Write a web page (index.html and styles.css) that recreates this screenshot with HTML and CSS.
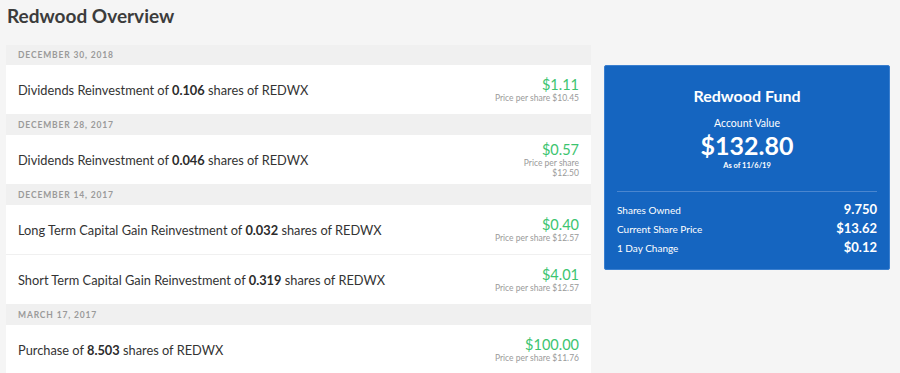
FILE: index.html
```html
<!DOCTYPE html>
<html>
<head>
<meta charset="utf-8">
<link rel="stylesheet" href="styles.css">
</head>
<body>
<h1 class="title">Redwood Overview</h1>
<div class="layout">
  <div class="list">
    <div class="date">DECEMBER 30, 2018</div>
    <div class="row">
      <div class="desc">Dividends Reinvestment of <b>0.106</b> shares of REDWX</div>
      <div class="amt"><div class="val">$1.11</div><div class="pps">Price per share $10.45</div></div>
    </div>
    <div class="date">DECEMBER 28, 2017</div>
    <div class="row">
      <div class="desc">Dividends Reinvestment of <b>0.046</b> shares of REDWX</div>
      <div class="amt"><div class="val">$0.57</div><div class="pps">Price per share<br>$12.50</div></div>
    </div>
    <div class="date">DECEMBER 14, 2017</div>
    <div class="row">
      <div class="desc">Long Term Capital Gain Reinvestment of <b>0.032</b> shares of REDWX</div>
      <div class="amt"><div class="val">$0.40</div><div class="pps">Price per share $12.57</div></div>
    </div>
    <div class="row">
      <div class="desc">Short Term Capital Gain Reinvestment of <b>0.319</b> shares of REDWX</div>
      <div class="amt"><div class="val">$4.01</div><div class="pps">Price per share $12.57</div></div>
    </div>
    <div class="date">MARCH 17, 2017</div>
    <div class="row">
      <div class="desc">Purchase of <b>8.503</b> shares of REDWX</div>
      <div class="amt"><div class="val">$100.00</div><div class="pps">Price per share $11.76</div></div>
    </div>
  </div>
  <div class="card">
    <div class="fund">Redwood Fund</div>
    <div class="av-label">Account Value</div>
    <div class="av">$132.80</div>
    <div class="asof">As of 11/6/19</div>
    <div class="stats">
      <div class="stat"><span>Shares Owned</span><b>9.750</b></div>
      <div class="stat"><span>Current Share Price</span><b>$13.62</b></div>
      <div class="stat"><span>1 Day Change</span><b>$0.12</b></div>
    </div>
  </div>
</div>
</body>
</html>
```
FILE: styles.css
```css
* { box-sizing: border-box; }
html, body { margin: 0; padding: 0; }
body {
  background: #f5f5f5;
  font-family: Lato, "Open Sans", sans-serif;
  color: #333;
  height: 373px;
  overflow: hidden;
}
.title {
  margin: 0;
  padding: 5px 0 0 7px;
  height: 45px;
  font-size: 19px;
  font-weight: 700;
  color: #3c3c3c;
  line-height: 22px;
}
.layout {
  display: flex;
  align-items: flex-start;
  padding-left: 6px;
}
.list {
  width: 585px;
  background: #f0f0f0;
  display: flex;
  flex-direction: column;
}
.date {
  height: 20px;
  padding: 5px 0 0 12px;
  font-size: 8.5px;
  line-height: 11px;
  font-weight: 700;
  letter-spacing: 0.85px;
  color: #9a9a9a;
}
.row {
  background: #fff;
  height: 49px;
  margin-bottom: 1px;
  display: flex;
  align-items: center;
  justify-content: space-between;
  padding: 0 12px;
}
.desc {
  font-size: 12.8px;
  color: #333;
}
.desc b { font-weight: 700; color: #2c2c2c; }
.amt { text-align: right; }
.val {
  font-size: 14.5px;
  color: #3cc46f;
  line-height: 16px;
}
.pps {
  font-size: 8.5px;
  color: #9a9a9a;
  line-height: 10px;
}
.card {
  margin-left: 13px;
  margin-top: 20px;
  width: 286px;
  height: 205px;
  background: #1565c0;
  border: 1px solid #3a7fcf;
  border-radius: 2px;
  color: #fff;
  text-align: center;
  padding-top: 20px;
}
.fund { font-size: 16px; font-weight: 700; line-height: 20px; }
.av-label { font-size: 10.5px; margin-top: 11px; line-height: 12px; }
.av { font-size: 25px; font-weight: 700; line-height: 32px; }
.asof { font-size: 7.5px; line-height: 10px; font-weight: 700; }
.stats {
  margin: 20px 12px 0;
  border-top: 1px solid #4a86cf;
  padding-top: 8px;
}
.stat {
  display: flex;
  justify-content: space-between;
  align-items: baseline;
  height: 19px;
  line-height: 19px;
  font-size: 10px;
}
.stat b { font-size: 13px; font-weight: 700; }
```
